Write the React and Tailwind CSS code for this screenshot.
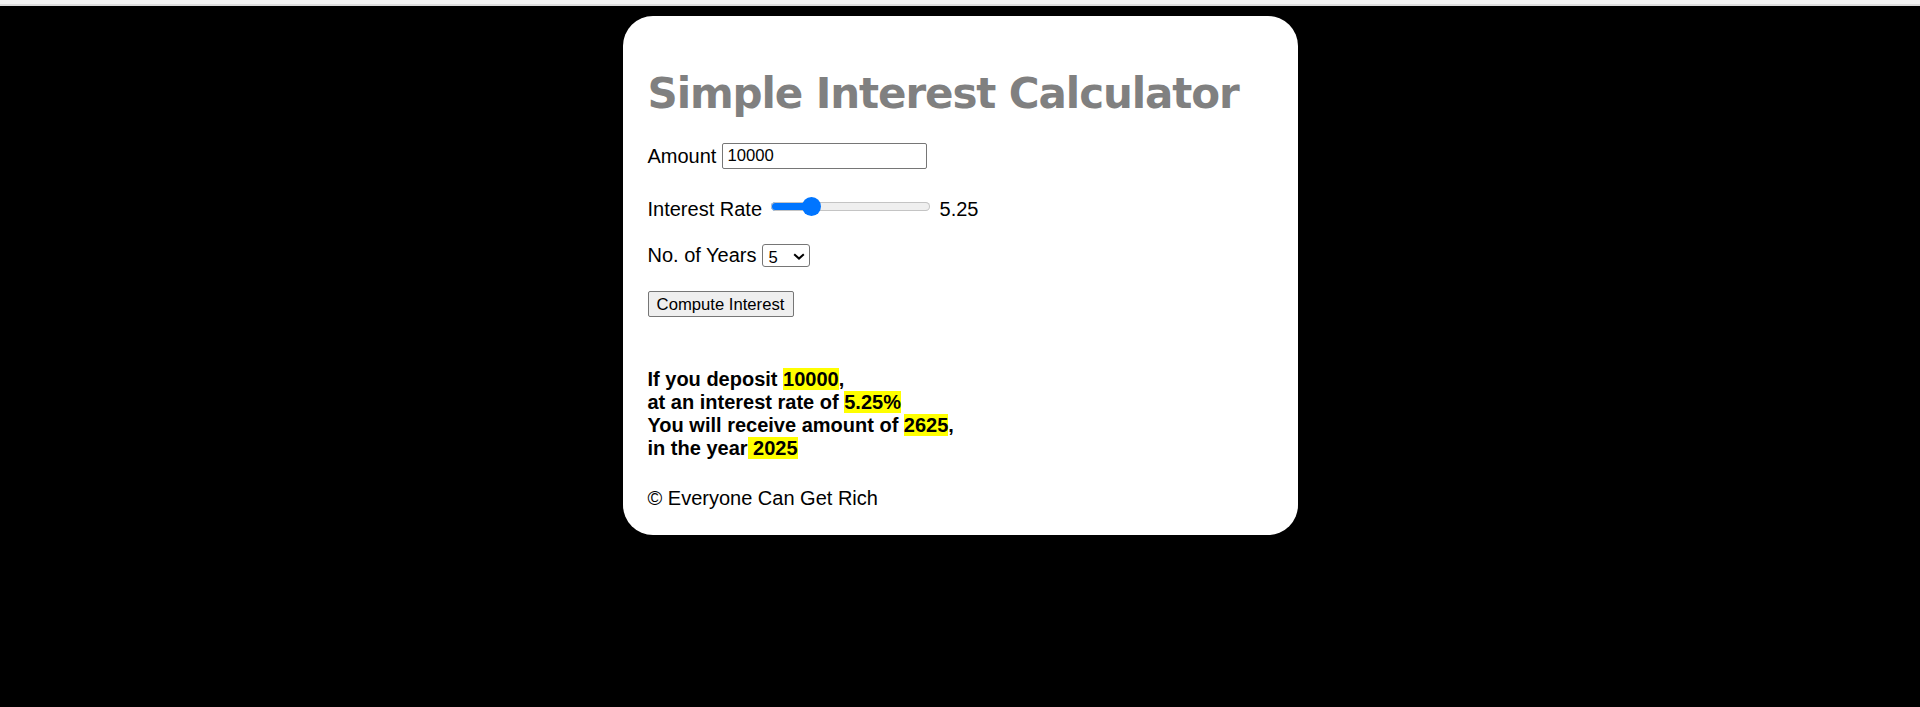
import { useState } from "react";

const years = [1, 2, 3, 4, 5, 6, 7, 8, 9, 10];

export default function App() {
    const [amount, setAmount] = useState("10000");
    const [rate, setRate] = useState(5.25);
    const [term, setTerm] = useState(5);
    const [result, setResult] = useState({ amount: "10000", rate: 5.25, interest: 2625, year: 2025 });

    const compute = () => {
        const interest = (Number(amount) * rate * term) / 100;
        setResult({ amount, rate, interest, year: 2020 + Number(term) });
    };

    // where the blue part of the track ends (thumb centre)
    const fill = 9.5 + 140 * ((rate - 1) / 19);

    return (
        <div className="min-h-screen bg-black font-['Liberation_Sans',Arial,sans-serif] text-[20px] text-black">
            <div className="h-[4px] bg-[#f3f3f3]" />
            <div className="h-[2px] bg-[#dcdcdc]" />
            <div className="mx-auto mt-[10px] w-[675px] rounded-[30px] bg-white px-[25px] pt-[54px] pb-[25px]">
                <h1 className="font-['Verdana','DejaVu_Sans',sans-serif] text-[42px] leading-[48px] font-bold tracking-[-1.1px] text-[#808080]">
                    Simple Interest Calculator
                </h1>

                <div className="mt-[25px] flex items-center">
                    <label htmlFor="amount" className="leading-[23px]">Amount</label>
                    <input
                        id="amount"
                        type="number"
                        value={amount}
                        onChange={(e) => setAmount(e.target.value)}
                        className="ml-[6px] h-[26px] w-[205px] rounded-[2px] border border-[#767676] px-[4px] text-[16.67px] outline-none [appearance:textfield] [&::-webkit-inner-spin-button]:appearance-none"
                    />
                </div>

                <div className="mt-[27px] flex items-start">
                    <label htmlFor="rate" className="mt-[2px] leading-[23px]">Interest Rate</label>
                    <div className="ml-[8.5px] flex h-[20px] items-center">
                        <input
                            id="rate"
                            type="range"
                            min="1"
                            max="20"
                            step="0.25"
                            value={rate}
                            onChange={(e) => setRate(Number(e.target.value))}
                            style={{ background: `linear-gradient(to right, #0075ff ${fill}px, #efefef ${fill}px)` }}
                            className="h-[9px] w-[159px] cursor-pointer appearance-none rounded-full shadow-[inset_0_0_0_1px_#c4c4c4] outline-none [&::-webkit-slider-thumb]:h-[19px] [&::-webkit-slider-thumb]:w-[19px] [&::-webkit-slider-thumb]:appearance-none [&::-webkit-slider-thumb]:rounded-full [&::-webkit-slider-thumb]:bg-[#0075ff]"
                        />
                    </div>
                    <span className="mt-[2px] ml-[10px] leading-[23px]">{rate}</span>
                </div>

                <div className="mt-[23px] flex items-center">
                    <label htmlFor="years" className="leading-[23px]">No. of Years</label>
                    <div className="relative ml-[6px]">
                        <select
                            id="years"
                            value={term}
                            onChange={(e) => setTerm(Number(e.target.value))}
                            className="block h-[23px] w-[48px] appearance-none rounded-[3px] border border-[#767676] bg-white pl-[5px] text-[16.67px] outline-none"
                        >
                            {years.map((y) => (
                                <option key={y} value={y}>{y}</option>
                            ))}
                        </select>
                        <svg className="pointer-events-none absolute top-[9px] left-[31px]" width="12" height="7" viewBox="0 0 12 7" fill="none">
                            <polyline points="1.2,1.2 6,5.6 10.8,1.2" stroke="#000" strokeWidth="2" />
                        </svg>
                    </div>
                </div>

                <button
                    onClick={compute}
                    className="mt-[24px] block h-[26px] w-[146px] rounded-[2px] border border-[#767676] bg-[#efefef] text-[16.67px] hover:bg-[#e5e5e5]"
                >
                    Compute Interest
                </button>

                <div className="mt-[51px] leading-[23px] font-bold">
                    <div>If you deposit <span className="bg-[#ffff00]">{result.amount}</span>,</div>
                    <div>at an interest rate of <span className="bg-[#ffff00]">{result.rate}%</span></div>
                    <div>You will receive amount of <span className="bg-[#ffff00]">{result.interest}</span>,</div>
                    <div>in the year<span className="bg-[#ffff00]"> {result.year}</span></div>
                </div>

                <p className="mt-[27px] leading-[23px]">© Everyone Can Get Rich</p>
            </div>
        </div>
    );
}
